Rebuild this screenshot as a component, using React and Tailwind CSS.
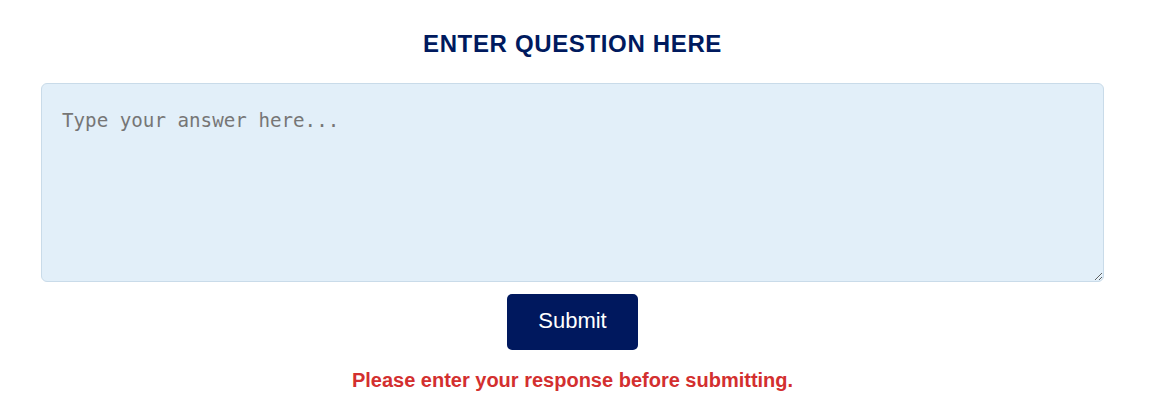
export default function App() {
  return (
    <div className="w-[1145px] px-[41px] pt-[30px] bg-white" style={{ fontFamily: '"Liberation Sans", Arial, sans-serif' }}>
      <h2 className="text-center text-[24px] font-bold tracking-[0.65px] text-[#001a5e] leading-[1.15]">ENTER QUESTION HERE</h2>
      <div className="mt-[25px] flex flex-col items-center">
        <textarea
          placeholder="Type your answer here..."
          className="block w-full h-[199px] px-5 pt-[23px] pb-5 rounded-md border border-[#c9dbe9] bg-[#e2eff9] text-[19.2px] leading-[1.5] text-gray-800 placeholder-[#767676] outline-none"
          style={{ fontFamily: '"DejaVu Sans Mono", monospace' }}
        />
        <button className="mt-[12px] w-[131px] h-[56px] rounded-[5px] bg-[#00185e] text-white text-[22px] leading-[1.15] pb-[1px]">
          Submit
        </button>
        <p className="mt-[19px] text-[20px] font-bold text-[#d32f2f] leading-[1.15]">Please enter your response before submitting.</p>
      </div>
    </div>
  )
}
